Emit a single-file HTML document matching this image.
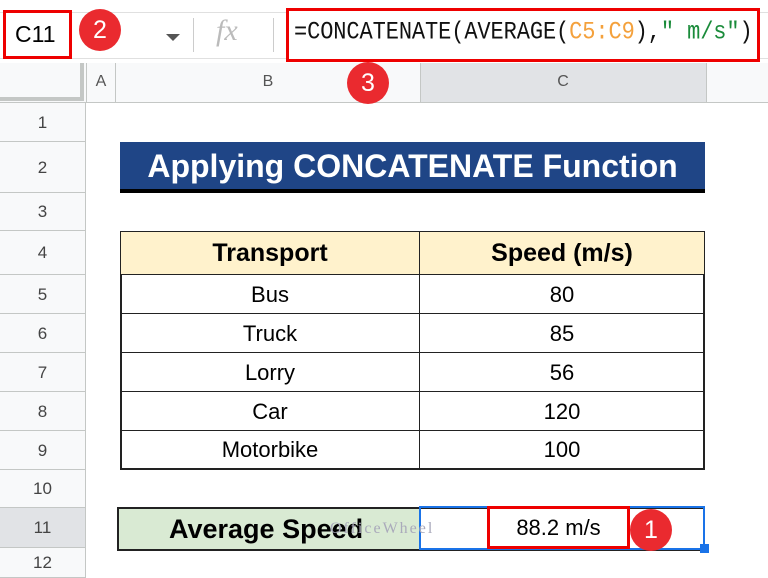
<!DOCTYPE html>
<html><head><style>
body{margin:0;width:768px;height:568px;overflow:hidden;background:#fff;font-family:"Liberation Sans",Arial,sans-serif;position:relative}
.a{position:absolute}
.rh{position:absolute;left:0;width:86px;background:#f8f9fa;border-bottom:1px solid #c4c7c5;border-right:1px solid #c4c7c5;color:#444;font-size:17px;text-align:center;box-sizing:border-box}
.circ{position:absolute;width:42px;height:42px;border-radius:50%;background:#ea2a2f;color:#fff;font-size:25px;text-align:center;line-height:42px}
.td{position:absolute;box-sizing:border-box;text-align:center;font-size:22px;color:#000}
</style></head><body>
<div class="a" style="left:0;top:12px;width:768px;height:1px;background:#e0e0e0"></div>
<div class="a" style="left:0;top:58px;width:768px;height:1px;background:#e0e0e0"></div>
<div class="a" style="left:3px;top:10px;width:69px;height:49px;border:3px solid #e00;box-sizing:border-box;font-size:23px;line-height:43px;padding-left:9px;color:#000;font-weight:500">C11</div>
<div class="circ" style="left:79px;top:9px">2</div>
<div class="a" style="left:166px;top:34px;width:0;height:0;border-left:7px solid transparent;border-right:7px solid transparent;border-top:7px solid #555"></div>
<div class="a" style="left:193px;top:18px;width:1px;height:34px;background:#ccc"></div>
<div class="a" style="left:216px;top:14px;font-family:'Liberation Serif',serif;font-style:italic;font-size:30px;color:#bbb">fx</div>
<div class="a" style="left:273px;top:18px;width:1px;height:34px;background:#ccc"></div>
<div class="a" style="left:286px;top:8px;width:474px;height:54px;border:3px solid #e00;box-sizing:border-box;background:#fff"></div>
<div class="a" style="left:294px;top:20px;font-family:'Liberation Mono',monospace;font-size:22px;color:#111;letter-spacing:-0.1px;white-space:nowrap;transform:scaleY(1.12);transform-origin:0 50%">=CONCATENATE(AVERAGE(<span style="color:#f4a13c">C5:C9</span>),<span style="color:#1a8b3a">" m/s"</span>)</div>
<div class="a" style="left:0;top:63px;width:768px;height:40px;background:#f8f9fa;border-bottom:1px solid #c4c7c5;box-sizing:border-box"></div>
<div class="a" style="left:0;top:63px;width:80px;height:34px;border-right:4px solid #c4c7c5;border-bottom:4px solid #c4c7c5"></div>
<div class="a" style="left:86px;top:63px;width:1px;height:40px;background:#c4c7c5"></div>
<div class="a" style="left:115px;top:63px;width:1px;height:40px;background:#c4c7c5"></div>
<div class="a" style="left:420px;top:63px;width:285px;height:39px;background:#e1e3e6;border-left:1px solid #c4c7c5;border-right:1px solid #c4c7c5"></div>
<div class="a" style="left:87px;top:73px;width:28px;text-align:center;font-size:16px;color:#555">A</div>
<div class="a" style="left:116px;top:73px;width:304px;text-align:center;font-size:16px;color:#555">B</div>
<div class="a" style="left:421px;top:73px;width:284px;text-align:center;font-size:16px;color:#555">C</div>
<div class="circ" style="left:347px;top:62px">3</div>
<div class="rh" style="top:103px;height:39px;line-height:39px">1</div>
<div class="rh" style="top:142px;height:51px;line-height:51px">2</div>
<div class="rh" style="top:193px;height:38px;line-height:38px">3</div>
<div class="rh" style="top:231px;height:44px;line-height:44px">4</div>
<div class="rh" style="top:275px;height:39px;line-height:39px">5</div>
<div class="rh" style="top:314px;height:39px;line-height:39px">6</div>
<div class="rh" style="top:353px;height:39px;line-height:39px">7</div>
<div class="rh" style="top:392px;height:39px;line-height:39px">8</div>
<div class="rh" style="top:431px;height:39px;line-height:39px">9</div>
<div class="rh" style="top:470px;height:38px;line-height:38px">10</div>
<div class="rh" style="top:508px;height:40px;line-height:40px;background:#e1e3e6">11</div>
<div class="rh" style="top:548px;height:30px;line-height:30px">12</div>
<div class="a" style="left:120px;top:142px;width:585px;height:51px;background:#1f4586;border-bottom:4px solid #000;box-sizing:border-box;color:#fff;font-weight:bold;font-size:32px;text-align:center;line-height:49px;white-space:nowrap">Applying CONCATENATE Function</div>
<div class="a" style="left:120px;top:231px;width:585px;height:239px;border:2px solid #222;box-sizing:border-box"></div>
<div class="td" style="left:121px;top:232px;width:299px;height:43px;background:#fff2cc;border-right:1px solid #222;border-bottom:1px solid #222;font-weight:bold;font-size:25px;line-height:43px">Transport</div>
<div class="td" style="left:420px;top:232px;width:284px;height:43px;background:#fff2cc;border-bottom:1px solid #222;font-weight:bold;font-size:25px;line-height:43px">Speed (m/s)</div>
<div class="td" style="left:121px;top:275px;width:299px;height:39px;border-right:1px solid #222;border-bottom:1px solid #222;line-height:39px">Bus</div>
<div class="td" style="left:420px;top:275px;width:284px;height:39px;border-bottom:1px solid #222;line-height:39px">80</div>
<div class="td" style="left:121px;top:314px;width:299px;height:39px;border-right:1px solid #222;border-bottom:1px solid #222;line-height:39px">Truck</div>
<div class="td" style="left:420px;top:314px;width:284px;height:39px;border-bottom:1px solid #222;line-height:39px">85</div>
<div class="td" style="left:121px;top:353px;width:299px;height:39px;border-right:1px solid #222;border-bottom:1px solid #222;line-height:39px">Lorry</div>
<div class="td" style="left:420px;top:353px;width:284px;height:39px;border-bottom:1px solid #222;line-height:39px">56</div>
<div class="td" style="left:121px;top:392px;width:299px;height:39px;border-right:1px solid #222;border-bottom:1px solid #222;line-height:39px">Car</div>
<div class="td" style="left:420px;top:392px;width:284px;height:39px;border-bottom:1px solid #222;line-height:39px">120</div>
<div class="td" style="left:121px;top:431px;width:299px;height:38px;border-right:1px solid #222;line-height:38px">Motorbike</div>
<div class="td" style="left:420px;top:431px;width:284px;height:38px;line-height:38px">100</div>
<div class="a" style="left:117px;top:507px;width:588px;height:44px;border:2px solid #222;box-sizing:border-box"></div>
<div class="td" style="left:119px;top:509px;width:301px;height:40px;background:#d9ead3;font-weight:bold;font-size:27px;line-height:40px;padding-left:50px;text-align:left;white-space:nowrap">Average Speed</div>
<div class="a" style="left:419px;top:506px;width:286px;height:44px;border:2px solid #1a73e8;box-sizing:border-box"></div>
<div class="a" style="left:700px;top:544px;width:9px;height:9px;background:#1a73e8"></div>
<div class="a" style="left:330px;top:520px;font-family:'Liberation Serif',serif;font-size:16px;letter-spacing:2px;color:#aab">OfficeWheel</div>
<div class="td" style="left:487px;top:506px;width:143px;height:43px;border:3px solid #e00;line-height:37px;background:#fff">88.2 m/s</div>
<div class="circ" style="left:630px;top:509px">1</div>
</body></html>
